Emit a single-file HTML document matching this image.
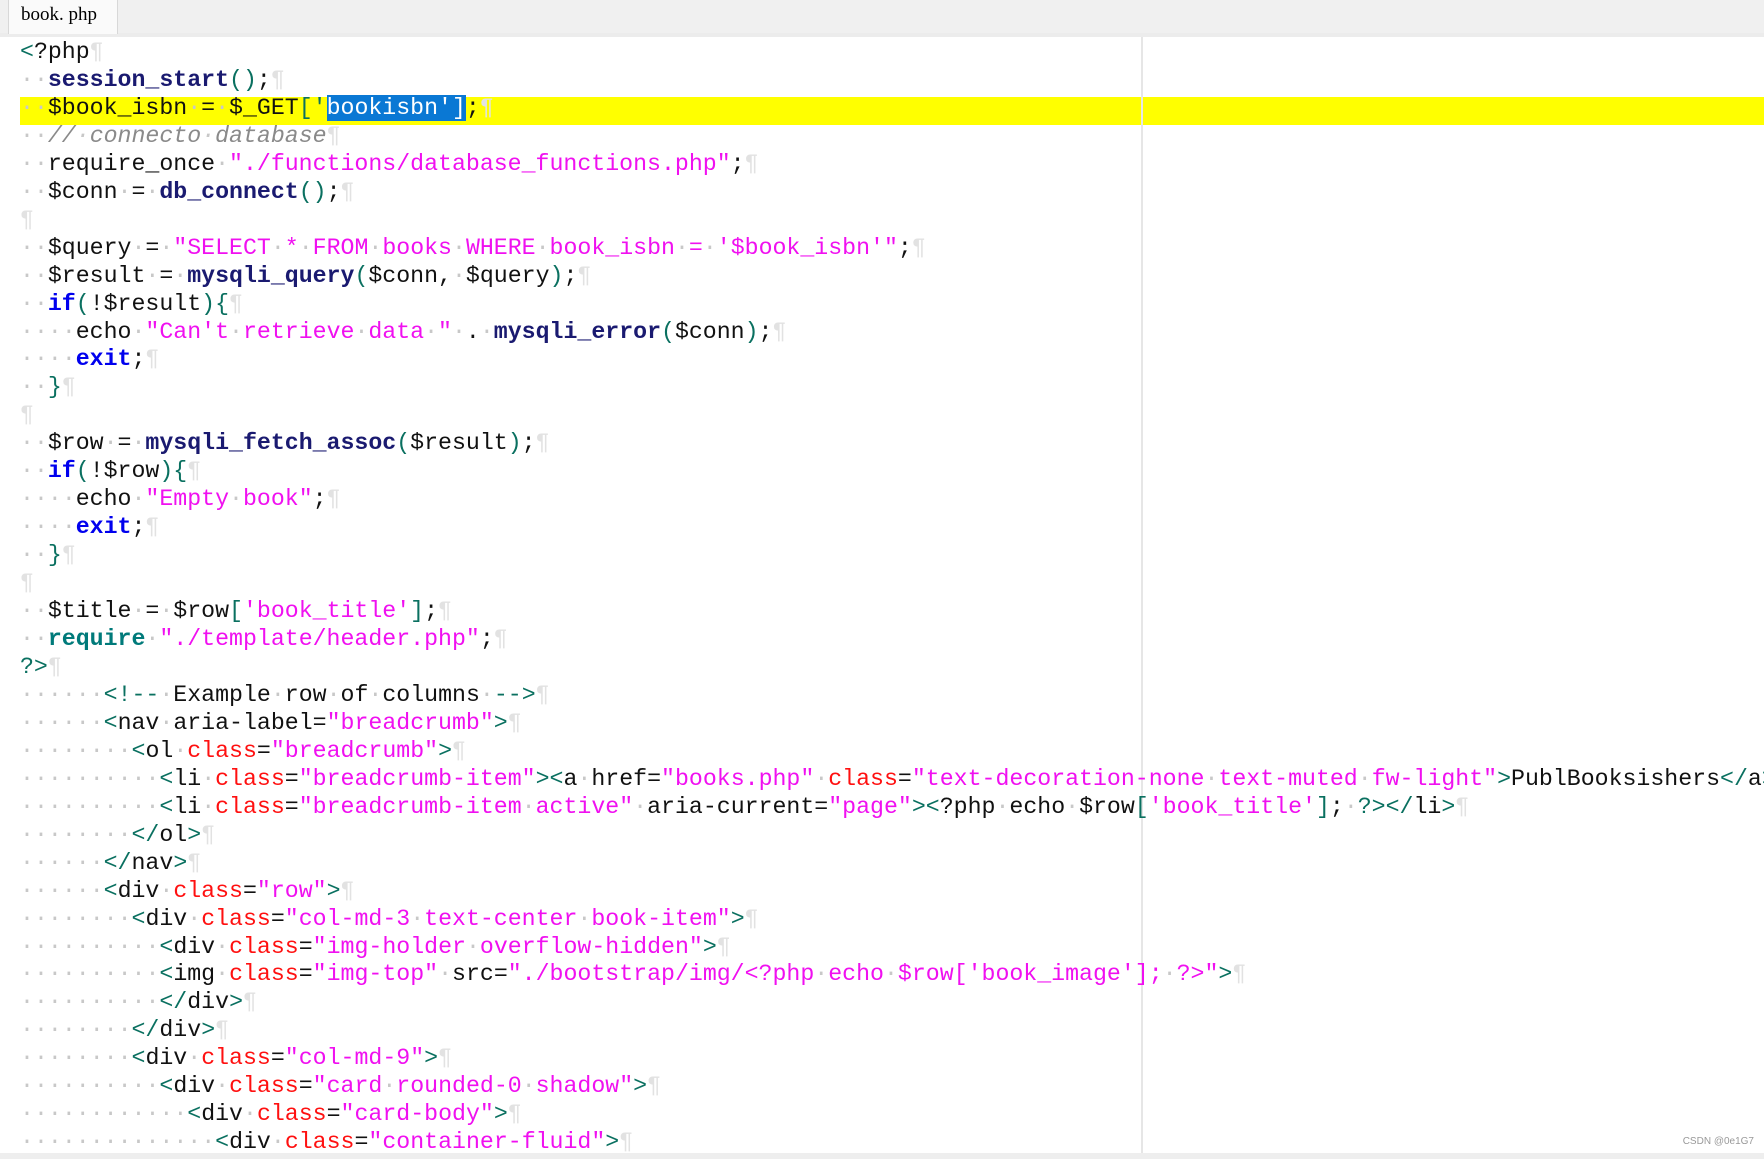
<!DOCTYPE html>
<html><head><meta charset="utf-8">
<style>
html,body{margin:0;padding:0;width:1764px;height:1159px;overflow:hidden;background:#fff;}
.top{position:absolute;left:0;top:0;width:1764px;height:37px;background:#f0f0f0;border-bottom:4px solid #ececec;box-sizing:border-box;}
.tab{position:absolute;left:8px;top:0;width:110px;height:34px;background:#fafafa;border-right:1px solid #d8d8d8;border-left:1px solid #d8d8d8;font-family:"Liberation Serif","Noto Serif CJK SC",serif;font-size:19px;color:#000;line-height:30px;padding-left:12px;box-sizing:border-box;}
.vline{position:absolute;left:1141px;top:37px;width:2px;height:1116px;background:#e6e6e6;}
.bottom{position:absolute;left:0;top:1153px;width:1764px;height:6px;background:#eeeeee;}
.hl{position:absolute;left:20px;top:97px;width:1744px;height:28px;background:#ffff00;}
.code{position:absolute;left:20px;top:39px;font-family:"Liberation Mono",monospace;font-size:23.23px;line-height:27.96px;color:#111;white-space:pre;}
.code div{height:27.96px;}
.code div::after{content:"¶";color:#e2e2e2;}
.sp{color:#c8c8c8;}
.f{color:#1a1a70;font-weight:bold;}
.k{color:#0000ee;font-weight:bold;}
.t{color:#007a7a;font-weight:bold;}
.s{color:#f010f0;}
.p{color:#0a7060;}
.c{color:#8a8a8a;font-style:italic;}
.a{color:#ff1010;}
.sel{background:#0a78d4;color:#fff;}
.wm{position:absolute;right:10px;top:1136px;font-family:"Liberation Sans",sans-serif;font-size:10px;color:#999;}
</style></head><body>
<div class="top"><div class="tab">book. php</div></div>
<div class="hl"></div>
<div class="vline"></div>
<div class="code" id="code">
<div><span class="p">&lt;</span>?php</div>
<div>  <span class="f">session_start</span><span class="p">()</span>;</div>
<div>  $book_isbn = $_GET<span class="p">['</span><span class="sel">bookisbn']</span>;</div>
<div>  <span class="c">// connecto database</span></div>
<div>  require_once <span class="s">"./functions/database_functions.php"</span>;</div>
<div>  $conn = <span class="f">db_connect</span><span class="p">()</span>;</div>
<div></div>
<div>  $query = <span class="s">"SELECT * FROM books WHERE book_isbn = '$book_isbn'"</span>;</div>
<div>  $result = <span class="f">mysqli_query</span><span class="p">(</span>$conn, $query<span class="p">)</span>;</div>
<div>  <span class="k">if</span><span class="p">(</span>!$result<span class="p">){</span></div>
<div>    echo <span class="s">"Can't retrieve data "</span> . <span class="f">mysqli_error</span><span class="p">(</span>$conn<span class="p">)</span>;</div>
<div>    <span class="k">exit</span>;</div>
<div>  <span class="p">}</span></div>
<div></div>
<div>  $row = <span class="f">mysqli_fetch_assoc</span><span class="p">(</span>$result<span class="p">)</span>;</div>
<div>  <span class="k">if</span><span class="p">(</span>!$row<span class="p">){</span></div>
<div>    echo <span class="s">"Empty book"</span>;</div>
<div>    <span class="k">exit</span>;</div>
<div>  <span class="p">}</span></div>
<div></div>
<div>  $title = $row<span class="p">[</span><span class="s">'book_title'</span><span class="p">]</span>;</div>
<div>  <span class="t">require</span> <span class="s">"./template/header.php"</span>;</div>
<div><span class="p">?&gt;</span></div>
<div>      <span class="p">&lt;!--</span> Example row of columns <span class="p">--&gt;</span></div>
<div>      <span class="p">&lt;</span>nav aria-label=<span class="s">"breadcrumb"</span><span class="p">&gt;</span></div>
<div>        <span class="p">&lt;</span>ol <span class="a">class</span>=<span class="s">"breadcrumb"</span><span class="p">&gt;</span></div>
<div>          <span class="p">&lt;</span>li <span class="a">class</span>=<span class="s">"breadcrumb-item"</span><span class="p">&gt;&lt;</span>a href=<span class="s">"books.php"</span> <span class="a">class</span>=<span class="s">"text-decoration-none text-muted fw-light"</span><span class="p">&gt;</span>PublBooksishers<span class="p">&lt;/</span>a<span class="p">&gt;&lt;/</span>li<span class="p">&gt;</span></div>
<div>          <span class="p">&lt;</span>li <span class="a">class</span>=<span class="s">"breadcrumb-item active"</span> aria-current=<span class="s">"page"</span><span class="p">&gt;&lt;</span>?php echo $row<span class="p">[</span><span class="s">'book_title'</span><span class="p">]</span>; <span class="p">?&gt;&lt;/</span>li<span class="p">&gt;</span></div>
<div>        <span class="p">&lt;/</span>ol<span class="p">&gt;</span></div>
<div>      <span class="p">&lt;/</span>nav<span class="p">&gt;</span></div>
<div>      <span class="p">&lt;</span>div <span class="a">class</span>=<span class="s">"row"</span><span class="p">&gt;</span></div>
<div>        <span class="p">&lt;</span>div <span class="a">class</span>=<span class="s">"col-md-3 text-center book-item"</span><span class="p">&gt;</span></div>
<div>          <span class="p">&lt;</span>div <span class="a">class</span>=<span class="s">"img-holder overflow-hidden"</span><span class="p">&gt;</span></div>
<div>          <span class="p">&lt;</span>img <span class="a">class</span>=<span class="s">"img-top"</span> src=<span class="s">"./bootstrap/img/&lt;?php echo $row['book_image']; ?&gt;"</span><span class="p">&gt;</span></div>
<div>          <span class="p">&lt;/</span>div<span class="p">&gt;</span></div>
<div>        <span class="p">&lt;/</span>div<span class="p">&gt;</span></div>
<div>        <span class="p">&lt;</span>div <span class="a">class</span>=<span class="s">"col-md-9"</span><span class="p">&gt;</span></div>
<div>          <span class="p">&lt;</span>div <span class="a">class</span>=<span class="s">"card rounded-0 shadow"</span><span class="p">&gt;</span></div>
<div>            <span class="p">&lt;</span>div <span class="a">class</span>=<span class="s">"card-body"</span><span class="p">&gt;</span></div>
<div>              <span class="p">&lt;</span>div <span class="a">class</span>=<span class="s">"container-fluid"</span><span class="p">&gt;</span></div>
</div>
<div class="bottom"></div>
<div class="wm">CSDN @0e1G7</div>
<script>
(function(){
  var root=document.getElementById('code');
  var w=document.createTreeWalker(root,NodeFilter.SHOW_TEXT,null,false);
  var nodes=[];while(w.nextNode())nodes.push(w.currentNode);
  nodes.forEach(function(n){
    if(n.parentNode===root) { if(/^\s*$/.test(n.nodeValue)){n.parentNode.removeChild(n);} return; }
    if(n.nodeValue.indexOf(' ')<0) return;
    var frag=document.createDocumentFragment();
    var parts=n.nodeValue.split(' ');
    parts.forEach(function(p,i){
      if(i>0){var s=document.createElement('span');s.className='sp';s.textContent='·';frag.appendChild(s);}
      if(p)frag.appendChild(document.createTextNode(p));
    });
    n.parentNode.replaceChild(frag,n);
  });
})();
</script>
</body></html>
